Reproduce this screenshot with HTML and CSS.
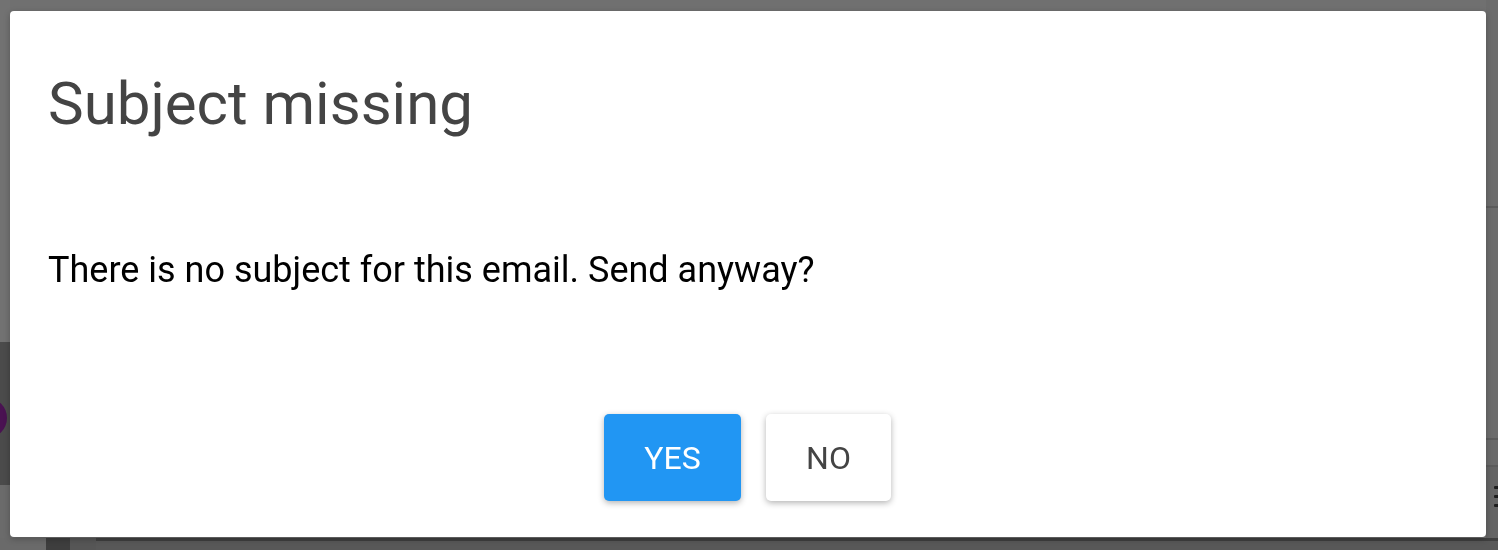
FILE: index.html
```html
<!DOCTYPE html>
<html lang="en">
<head>
<meta charset="utf-8">
<title>Subject missing</title>
<link rel="stylesheet" href="styles.css">
</head>
<body>
<div class="backdrop">
  <div class="side-left">
    <div class="sl-top"></div>
    <div class="sl-mid"><div class="avatar"></div></div>
    <div class="sl-bot"></div>
  </div>
  <div class="center"></div>
  <div class="side-right">
    <div class="sr-a"></div>
    <div class="sr-b"></div>
    <div class="sr-c"></div>
    <div class="sr-d">
      <span class="dot"></span><span class="dot"></span><span class="dot"></span>
    </div>
  </div>
  <div class="bottom">
    <div class="b1"></div>
    <div class="b2"></div>
    <div class="b3"></div>
    <div class="b4"></div>
  </div>
</div>

<div class="dialog" role="dialog" aria-labelledby="dlg-title">
  <h1 class="dialog-title" id="dlg-title">Subject missing</h1>
  <p class="dialog-body">There is no subject for this email. Send anyway?</p>
  <div class="dialog-actions">
    <button class="btn btn-primary">YES</button>
    <button class="btn btn-secondary">NO</button>
  </div>
</div>
</body>
</html>
```

FILE: styles.css
```css
* { box-sizing: border-box; }

html, body {
  margin: 0;
  padding: 0;
  width: 1498px;
  height: 550px;
  overflow: hidden;
  font-family: Roboto, "Liberation Sans", Arial, sans-serif;
  background: #707070;
}

.backdrop {
  display: grid;
  grid-template-columns: 10px 1fr 12px;
  grid-template-rows: 538px 12px;
  width: 1498px;
  height: 550px;
}

.side-left {
  display: flex;
  flex-direction: column;
  overflow: hidden;
}
.sl-top { height: 342px; background: #727272; }
.sl-mid {
  height: 143px;
  background: #4b4b4b;
  display: flex;
  align-items: center;
  padding-top: 8px;
}
.avatar {
  width: 40px;
  height: 40px;
  flex: none;
  margin-left: -33px;
  border-radius: 50%;
  background: #4a1252;
}
.sl-bot { flex: 1; background: #6b6b6b; }

.center { background: #707070; }

.side-right {
  display: flex;
  flex-direction: column;
  background: #6c6c6c;
}
.sr-a { height: 208px; border-bottom: 2px solid #5c5c5c; }
.sr-b { height: 232px; border-bottom: 2px solid #5c5c5c; }
.sr-c { height: 27px; border-bottom: 2px solid #5c5c5c; background: #6a6a6a; }
.sr-d {
  flex: 1;
  display: flex;
  flex-direction: column;
  align-items: flex-end;
  gap: 6px;
  padding-top: 19px;
  background: #646464;
}
.dot {
  display: block;
  width: 4px;
  height: 3px;
  background: #1e1e1e;
  border-radius: 1px 0 0 1px;
}

.bottom {
  grid-column: 1 / -1;
  display: flex;
  background: #555;
}
.b1 { width: 46px; background: #6a6a6a; }
.b2 { width: 24px; background: #3e3e3e; }
.b3 { width: 26px; background: #565656; }
.b4 {
  flex: 1;
  background: #585858;
  border-top: 3px solid #3f3f3f;
}

.dialog {
  position: fixed;
  top: 11px;
  left: 10px;
  width: 1476px;
  height: 526px;
  background: #ffffff;
  border-radius: 4px;
  box-shadow: 0 2px 6px rgba(0, 0, 0, 0.25);
  display: flex;
  flex-direction: column;
  padding: 57px 38px 0 38px;
}

.dialog-title {
  margin: 0;
  font-weight: 400;
  font-size: 60px;
  line-height: 72px;
  color: #444444;
}

.dialog-body {
  margin: 109px 0 0 0;
  font-size: 36px;
  line-height: 43px;
  color: #000000;
}

.dialog-actions {
  margin-top: 122px;
  margin-right: 1px;
  display: flex;
  justify-content: center;
  gap: 25px;
}

.btn {
  font-family: Roboto, "Liberation Sans", Arial, sans-serif;
  font-size: 32px;
  font-weight: 400;
  height: 87px;
  padding: 0 40px;
  border: none;
  border-radius: 5px;
  cursor: pointer;
  box-shadow: 0 2px 6px rgba(0, 0, 0, 0.3);
}
.btn-primary {
  width: 137px;
  background: #2196f3;
  color: #ffffff;
}
.btn-secondary {
  width: 125px;
  background: #ffffff;
  color: #444444;
}
```
